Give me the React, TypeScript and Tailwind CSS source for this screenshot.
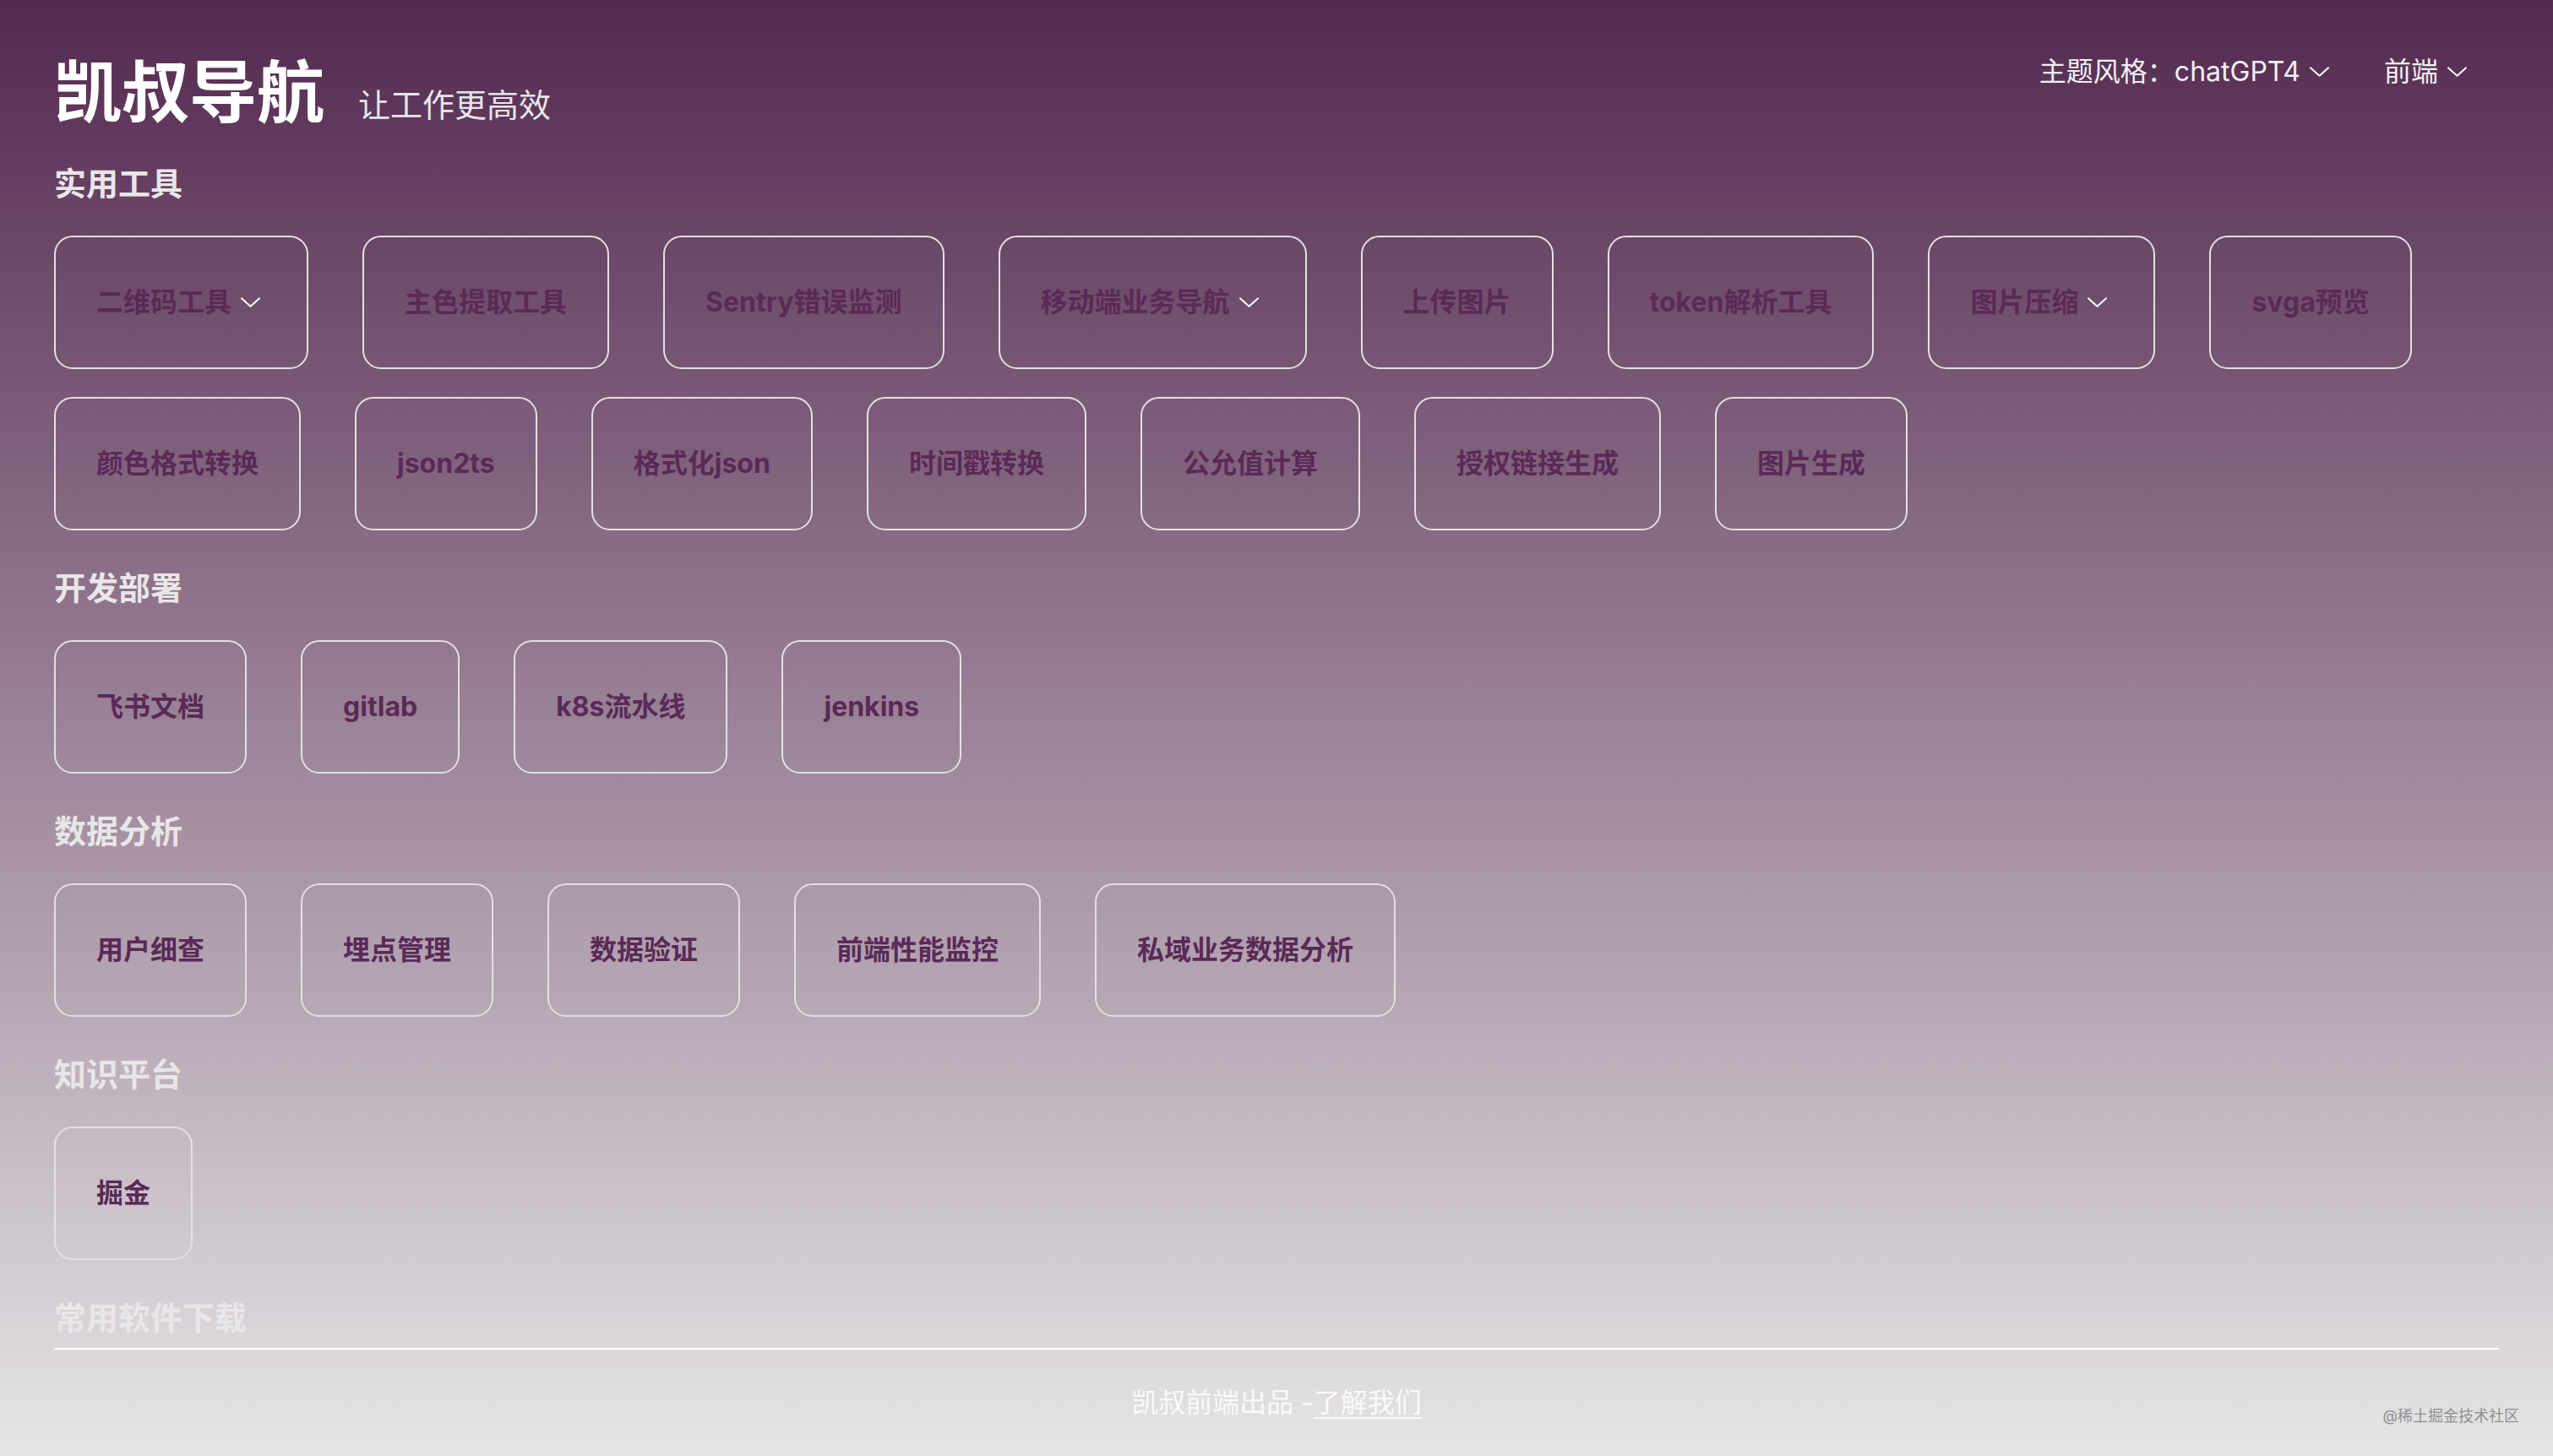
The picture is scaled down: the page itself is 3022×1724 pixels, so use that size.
import { Fragment } from 'react';

interface NavItem {
  name: string;
  dropdown?: boolean;
}

interface NavSection {
  title: string;
  items: NavItem[];
}

const sections: NavSection[] = [
  {
    title: '实用工具',
    items: [
      { name: '二维码工具', dropdown: true },
      { name: '主色提取工具' },
      { name: 'Sentry错误监测' },
      { name: '移动端业务导航', dropdown: true },
      { name: '上传图片' },
      { name: 'token解析工具' },
      { name: '图片压缩', dropdown: true },
      { name: 'svga预览' },
      { name: '颜色格式转换' },
      { name: 'json2ts' },
      { name: '格式化json' },
      { name: '时间戳转换' },
      { name: '公允值计算' },
      { name: '授权链接生成' },
      { name: '图片生成' },
    ],
  },
  {
    title: '开发部署',
    items: [{ name: '飞书文档' }, { name: 'gitlab' }, { name: 'k8s流水线' }, { name: 'jenkins' }],
  },
  {
    title: '数据分析',
    items: [
      { name: '用户细查' },
      { name: '埋点管理' },
      { name: '数据验证' },
      { name: '前端性能监控' },
      { name: '私域业务数据分析' },
    ],
  },
  {
    title: '知识平台',
    items: [{ name: '掘金' }],
  },
  {
    title: '常用软件下载',
    items: [],
  },
];

function Chevron({ className = '' }: { className?: string }) {
  return (
    <svg viewBox="0 0 24 12" fill="none" className={className}>
      <path d="M1 1 L12 11 L23 1" stroke="currentColor" strokeWidth="2" strokeLinecap="round" strokeLinejoin="round" />
    </svg>
  );
}

export default function App() {
  return (
    <div className="relative flex h-screen min-h-[1724px] flex-col bg-gradient-to-b from-[#532a50] to-[#e6e6e6] font-['Inter','Noto_Sans_CJK_SC',sans-serif]">
      <div className="flex flex-1 flex-col overflow-hidden px-[64px] pt-[69px]">
        {/* 顶部标题 + 切换 */}
        <header className="flex items-start justify-between">
          <div className="flex items-baseline">
            <h1 className="text-[80px] font-bold leading-none text-white">凯叔导航</h1>
            <span className="ml-[40px] text-[38px] leading-none text-[#e8e6e8]">让工作更高效</span>
          </div>
          <div className="mr-[38px] flex items-center gap-[65px] text-[32px] leading-none text-[#f2f0f2]">
            <button className="flex items-center">
              主题风格：chatGPT4
              <Chevron className="ml-[11px] h-[12px] w-[23px] text-white" />
            </button>
            <button className="flex items-center">
              前端
              <Chevron className="ml-[11px] h-[12px] w-[23px] text-white" />
            </button>
          </div>
        </header>

        {/* 导航分组 */}
        <main className="mt-[39px] flex flex-1 flex-col gap-[49px] overflow-hidden pt-[10px]">
          {sections.map((section) => (
            <section key={section.title}>
              <h2 className="text-[38px] font-bold leading-none text-[#e8e6e8]">{section.title}</h2>
              {section.items.length > 0 && (
                <div className="mt-[43px] flex flex-wrap gap-x-[64px] gap-y-[33px]">
                  {section.items.map((item) => (
                    <a
                      key={item.name}
                      className="flex h-[158px] items-center rounded-[22px] border-2 border-[#e4e0e4] px-[48px] text-[32px] font-bold leading-none text-[#592a56]"
                    >
                      {item.name}
                      {item.dropdown && (
                        <Fragment>
                          <Chevron className="ml-[11px] mr-[7px] h-[12px] w-[23px] text-white" />
                        </Fragment>
                      )}
                    </a>
                  ))}
                </div>
              )}
            </section>
          ))}
        </main>
      </div>

      <div className="mx-[64px] border-t-2 border-white" />

      {/* 底部 */}
      <footer className="flex h-[126px] items-center justify-center text-[32px] leading-none text-[#fafafa]">
        凯叔前端出品 -<a className="underline decoration-2 underline-offset-[6px]">了解我们</a>
      </footer>

      <span className="absolute bottom-[38px] right-[40px] text-[18px] leading-none text-[#8f8f8f]">@稀土掘金技术社区</span>
    </div>
  );
}
